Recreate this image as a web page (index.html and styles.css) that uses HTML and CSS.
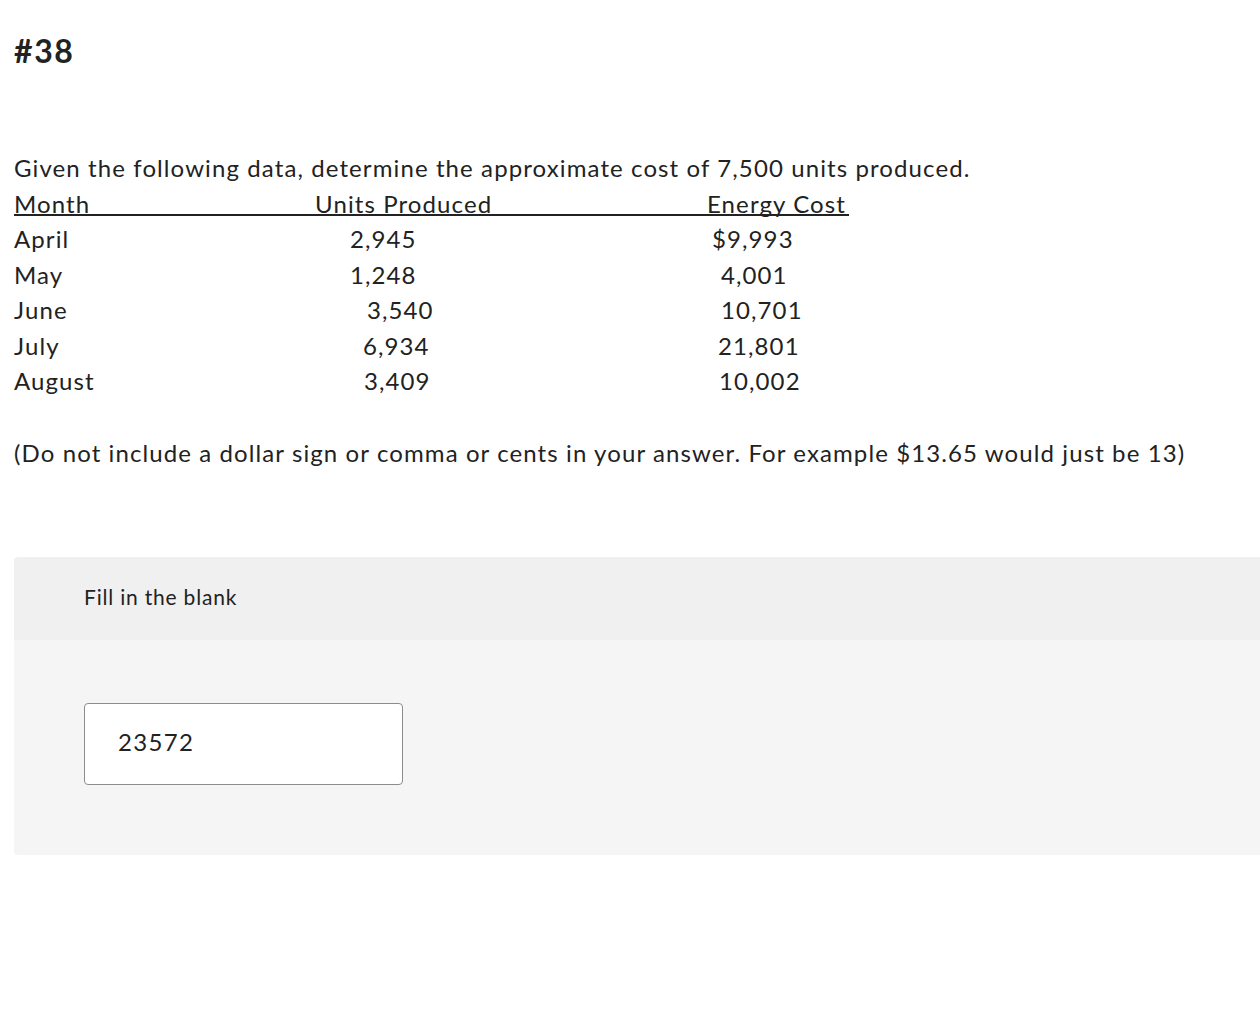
FILE: index.html
```html
<!DOCTYPE html>
<html lang="en">
<head>
<meta charset="utf-8">
<title>#38</title>
<link rel="stylesheet" href="styles.css">
</head>
<body>
<main class="page">
  <h1 class="qnum">#38</h1>
  <div class="prompt">
    <p class="line">Given the following data, determine the approximate cost of 7,500 units produced.</p>
    <div class="table">
      <div class="row head">
        <span class="c1">Month</span>
        <span class="c2">Units Produced</span>
        <span class="c3">Energy Cost</span>
      </div>
      <div class="row">
        <span class="c1">April</span>
        <span class="c2"><span class="u35">2,945</span></span>
        <span class="c3"><span class="e5">$9,993</span></span>
      </div>
      <div class="row">
        <span class="c1">May</span>
        <span class="c2"><span class="u35">1,248</span></span>
        <span class="c3"><span class="e14">4,001</span></span>
      </div>
      <div class="row">
        <span class="c1">June</span>
        <span class="c2"><span class="u52">3,540</span></span>
        <span class="c3"><span class="e14">10,701</span></span>
      </div>
      <div class="row">
        <span class="c1">July</span>
        <span class="c2"><span class="u48">6,934</span></span>
        <span class="c3"><span class="e11">21,801</span></span>
      </div>
      <div class="row">
        <span class="c1">August</span>
        <span class="c2"><span class="u49">3,409</span></span>
        <span class="c3"><span class="e12">10,002</span></span>
      </div>
    </div>
    <p class="line note">(Do not include a dollar sign or comma or cents in your answer. For example $13.65 would just be 13)</p>
  </div>

  <section class="answer">
    <div class="answer-head">Fill in the blank</div>
    <div class="answer-body">
      <input class="blank" type="text" value="23572" aria-label="Answer">
    </div>
  </section>
</main>
</body>
</html>
```

FILE: styles.css
```css
* { box-sizing: border-box; }

html, body {
  margin: 0;
  padding: 0;
  background: #ffffff;
}

body {
  font-family: "Lato", "Open Sans", sans-serif;
  color: #222222;
}

.page {
  padding: 0 0 0 14px;
}

.qnum {
  margin: 31px 0 0;
  font-size: 32px;
  line-height: 40px;
  font-weight: 700;
  letter-spacing: 1.6px;
  color: #222222;
}

.prompt {
  margin-top: 79px;
  font-size: 24px;
  line-height: 35.5px;
  letter-spacing: 1.1px;
}

.line {
  margin: 0;
}

.table {
  display: flex;
  flex-direction: column;
}

.row {
  display: flex;
  height: 35.5px;
  white-space: nowrap;
}

.row.head {
  width: 835px;
  height: 30.5px;
  border-bottom: 2px solid #222222;
  margin-bottom: 5px;
}

.c1 { width: 301px; flex: none; }
.c2 { width: 392px; flex: none; }
.c3 { flex: 1; }

.u35 { padding-left: 35px; }
.u48 { padding-left: 48px; }
.u49 { padding-left: 49px; }
.u52 { padding-left: 52px; }
.e5 { padding-left: 5px; }
.e11 { padding-left: 11px; }
.e12 { padding-left: 12px; }
.e14 { padding-left: 14px; }

.note {
  margin-top: 36.5px;
}

.answer {
  margin-top: 86.5px;
  border-radius: 4px 0 0 4px;
  overflow: hidden;
}

.answer-head {
  background: #f0f0f0;
  height: 83px;
  padding: 0 0 4px 70px;
  display: flex;
  align-items: center;
  font-size: 21px;
  letter-spacing: 0.8px;
  color: #222222;
}

.answer-body {
  background: #f5f5f5;
  height: 215px;
  padding: 63px 0 0 70px;
}

.blank {
  display: block;
  width: 319px;
  height: 82px;
  margin: 0;
  padding: 0 0 5px 33px;
  border: 1px solid #8c8c8c;
  border-radius: 4px;
  background: #ffffff;
  font-family: "Lato", "Open Sans", sans-serif;
  font-size: 24px;
  letter-spacing: 1.3px;
  color: #222222;
  outline: none;
}
```
